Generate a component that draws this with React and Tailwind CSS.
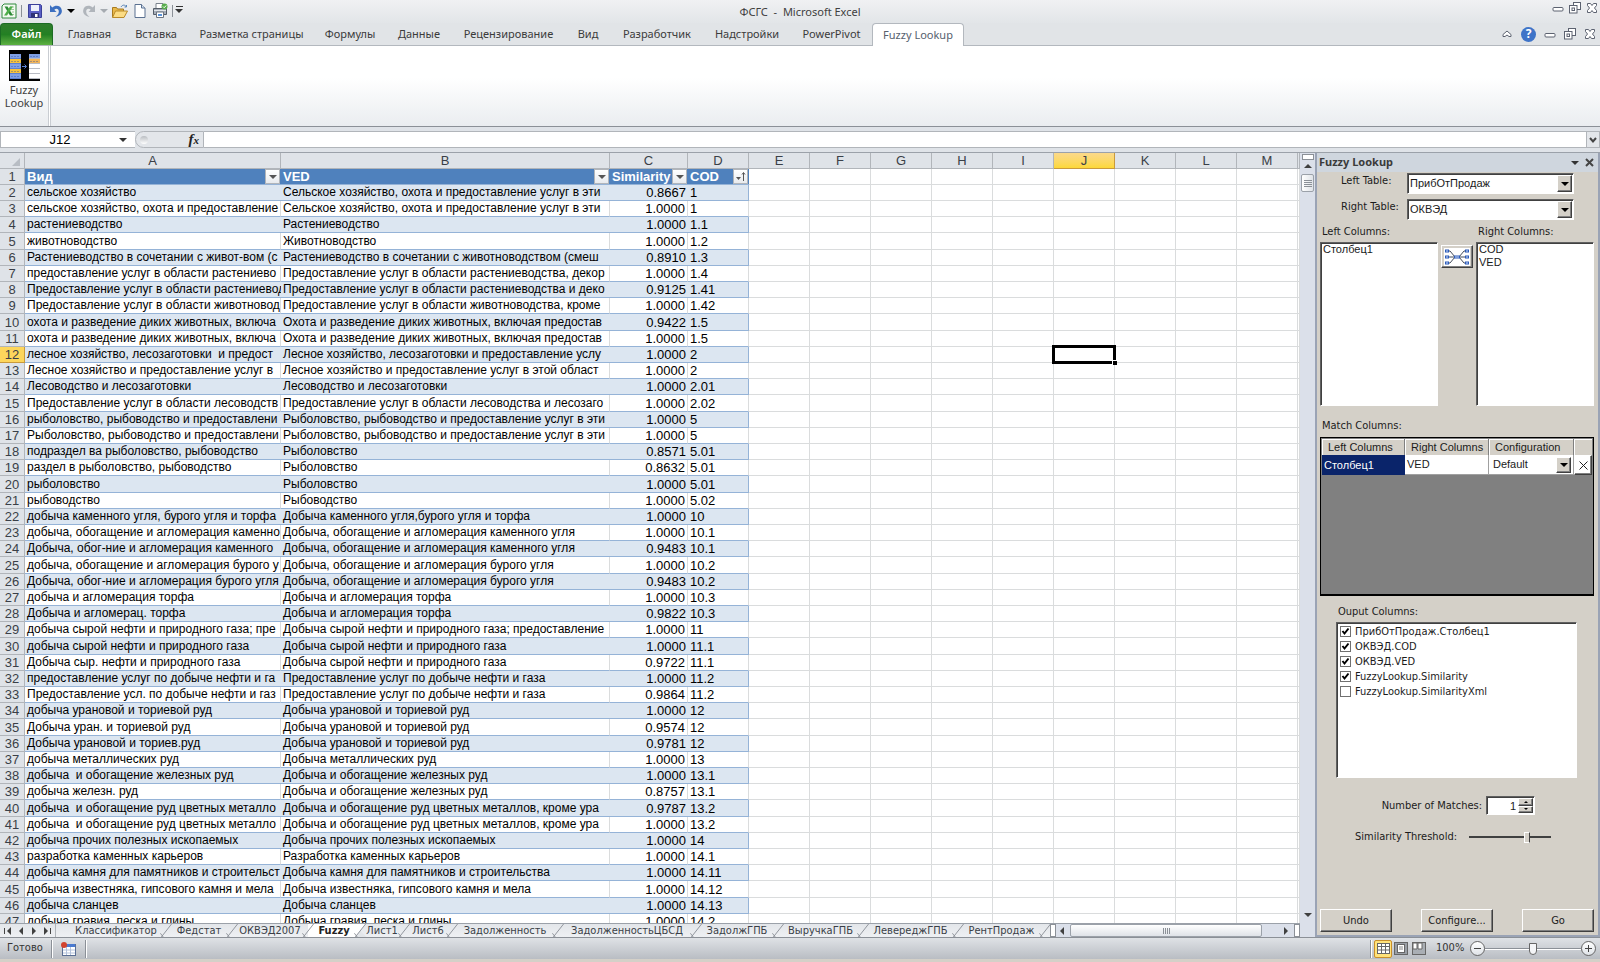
import React, { useState } from 'react';

const RIBBON_TABS = [
  { label: 'Главная', width: 'w-[67px]' },
  { label: 'Вставка', width: 'w-[66px]' },
  { label: 'Разметка страницы', width: 'w-[125px]' },
  { label: 'Формулы', width: 'w-[72px]' },
  { label: 'Данные', width: 'w-[66px]' },
  { label: 'Рецензирование', width: 'w-[113px]' },
  { label: 'Вид', width: 'w-[46px]' },
  { label: 'Разработчик', width: 'w-[92px]' },
  { label: 'Надстройки', width: 'w-[88px]' },
  { label: 'PowerPivot', width: 'w-[81px]' },
  { label: 'Fuzzy Lookup', width: 'w-[92px]' },
];

const SHEET_TABS = [
  { label: 'Классификатор', width: 'w-[100px]' },
  { label: 'Федстат', width: 'w-[66px]' },
  { label: 'ОКВЭД2007', width: 'w-[76px]' },
  { label: 'Fuzzy', width: 'w-[52px]' },
  { label: 'Лист1', width: 'w-[44px]' },
  { label: 'Лист6', width: 'w-[48px]' },
  { label: 'Задолженность', width: 'w-[106px]' },
  { label: 'ЗадолженностьЦБСД', width: 'w-[138px]' },
  { label: 'ЗадолжГПБ', width: 'w-[82px]' },
  { label: 'ВыручкаГПБ', width: 'w-[85px]' },
  { label: 'ЛевереджГПБ', width: 'w-[95px]' },
  { label: 'РентПродаж', width: 'w-[87px]' },
];

const ROWS = [
  ['сельское хозяйство', 'Сельское хозяйство, охота и предоставление услуг в эти', '0.8667', '1'],
  ['сельское хозяйство, охота и предоставление', 'Сельское хозяйство, охота и предоставление услуг в эти', '1.0000', '1'],
  ['растениеводство', 'Растениеводство', '1.0000', '1.1'],
  ['животноводство', 'Животноводство', '1.0000', '1.2'],
  ['Растениеводство в сочетании с живот-вом (с', 'Растениеводство в сочетании с животноводством (смеш', '0.8910', '1.3'],
  ['предоставление услуг в области растениево', 'Предоставление услуг в области растениеводства, декор', '1.0000', '1.4'],
  ['Предоставление услуг в области растениевод', 'Предоставление услуг в области растениеводства и деко', '0.9125', '1.41'],
  ['Предоставление услуг в области животновод', 'Предоставление услуг в области животноводства, кроме', '1.0000', '1.42'],
  ['охота и разведение диких животных, включа', 'Охота и разведение диких животных, включая предостав', '0.9422', '1.5'],
  ['охота и разведение диких животных, включа', 'Охота и разведение диких животных, включая предостав', '1.0000', '1.5'],
  ['лесное хозяйство, лесозаготовки  и предост', 'Лесное хозяйство, лесозаготовки и предоставление услу', '1.0000', '2'],
  ['Лесное хозяйство и предоставление услуг в', 'Лесное хозяйство и предоставление услуг в этой област', '1.0000', '2'],
  ['Лесоводство и лесозаготовки', 'Лесоводство и лесозаготовки', '1.0000', '2.01'],
  ['Предоставление услуг в области лесоводств', 'Предоставление услуг в области лесоводства и лесозаго', '1.0000', '2.02'],
  ['рыболовство, рыбоводство и предоставлени', 'Рыболовство, рыбоводство и предоставление услуг в эти', '1.0000', '5'],
  ['Рыболовство, рыбоводство и предоставлени', 'Рыболовство, рыбоводство и предоставление услуг в эти', '1.0000', '5'],
  ['подраздел ва рыболовство, рыбоводство', 'Рыболовство', '0.8571', '5.01'],
  ['раздел в рыболовство, рыбоводство', 'Рыболовство', '0.8632', '5.01'],
  ['рыболовство', 'Рыболовство', '1.0000', '5.01'],
  ['рыбоводство', 'Рыбоводство', '1.0000', '5.02'],
  ['добыча каменного угля, бурого угля и торфа', 'Добыча каменного угля,бурого угля и торфа', '1.0000', '10'],
  ['добыча, обогащение и агломерация каменно', 'Добыча, обогащение и агломерация каменного угля', '1.0000', '10.1'],
  ['Добыча, обог-ние и агломерация каменного', 'Добыча, обогащение и агломерация каменного угля', '0.9483', '10.1'],
  ['добыча, обогащение и агломерация бурого у', 'Добыча, обогащение и агломерация бурого угля', '1.0000', '10.2'],
  ['Добыча, обог-ние и агломерация бурого угля', 'Добыча, обогащение и агломерация бурого угля', '0.9483', '10.2'],
  ['добыча и агломерация торфа', 'Добыча и агломерация торфа', '1.0000', '10.3'],
  ['Добыча и агломерац. торфа', 'Добыча и агломерация торфа', '0.9822', '10.3'],
  ['добыча сырой нефти и природного газа; пре', 'Добыча сырой нефти и природного газа; предоставление', '1.0000', '11'],
  ['добыча сырой нефти и природного газа', 'Добыча сырой нефти и природного газа', '1.0000', '11.1'],
  ['Добыча сыр. нефти и природного газа', 'Добыча сырой нефти и природного газа', '0.9722', '11.1'],
  ['предоставление услуг по добыче нефти и га', 'Предоставление услуг по добыче нефти и газа', '1.0000', '11.2'],
  ['Предоставление усл. по добыче нефти и газ', 'Предоставление услуг по добыче нефти и газа', '0.9864', '11.2'],
  ['добыча урановой и ториевой руд', 'Добыча урановой и ториевой руд', '1.0000', '12'],
  ['Добыча уран. и ториевой руд', 'Добыча урановой и ториевой руд', '0.9574', '12'],
  ['Добыча урановой и ториев.руд', 'Добыча урановой и ториевой руд', '0.9781', '12'],
  ['добыча металлических руд', 'Добыча металлических руд', '1.0000', '13'],
  ['добыча  и обогащение железных руд', 'Добыча и обогащение железных руд', '1.0000', '13.1'],
  ['добыча железн. руд', 'Добыча и обогащение железных руд', '0.8757', '13.1'],
  ['добыча  и обогащение руд цветных металло', 'Добыча и обогащение руд цветных металлов, кроме ура', '0.9787', '13.2'],
  ['добыча  и обогащение руд цветных металло', 'Добыча и обогащение руд цветных металлов, кроме ура', '1.0000', '13.2'],
  ['добыча прочих полезных ископаемых', 'Добыча прочих полезных ископаемых', '1.0000', '14'],
  ['разработка каменных карьеров', 'Разработка каменных карьеров', '1.0000', '14.1'],
  ['добыча камня для памятников и строительст', 'Добыча камня для памятников и строительства', '1.0000', '14.11'],
  ['добыча известняка, гипсового камня и мела', 'Добыча известняка, гипсового камня и мела', '1.0000', '14.12'],
  ['добыча сланцев', 'Добыча сланцев', '1.0000', '14.13'],
  ['добыча гравия, песка и глины', 'Добыча гравия, песка и глины', '1.0000', '14.2'],
];

const EMPTY_COLUMNS = ['E', 'F', 'G', 'H', 'I', 'J', 'K', 'L', 'M'];
const ACTIVE_COLUMN = 'J';
const ACTIVE_ROW = 12;

const OUTPUT_COLUMNS = [
  'ПрибОтПродаж.Столбец1',
  'ОКВЭД.COD',
  'ОКВЭД.VED',
  'FuzzyLookup.Similarity',
  'FuzzyLookup.SimilarityXml',
];

const UI = "font-['Noto_Sans','Open_Sans',sans-serif]";
const TAHOMA = "font-['DejaVu_Sans_Condensed','DejaVu_Sans',sans-serif]";
const FIELD = "font-['Liberation_Sans',sans-serif] text-[11px]";
const SUNKEN = 'border border-t-[#606060] border-l-[#606060] border-b-white border-r-white shadow-[inset_1px_1px_0_#404040]';
const RAISED = 'border border-t-white border-l-white border-b-[#404040] border-r-[#404040] shadow-[inset_-1px_-1px_0_#808080]';

function Triangle({ dir = 'down', className = 'text-[#404040]' }) {
  const points = {
    down: '0,2 8,2 4,6',
    up: '0,6 8,6 4,2',
    left: '6,0 6,8 2,4',
    right: '2,0 2,8 6,4',
  };
  return (
    <svg viewBox="0 0 8 8" className={`size-2 shrink-0 ${className}`} aria-hidden="true">
      <polygon points={points[dir]} fill="currentColor" />
    </svg>
  );
}

function ExcelIcon() {
  return (
    <svg viewBox="0 0 16 16" className="size-4" aria-hidden="true">
      <path d="M3 1h12v14H1V3z" fill="#f4faf2" stroke="#2f8a3c" />
      <path d="M9 4h4M10 6.5h3M11 9h2M10 11.500h3" stroke="#9cc79b" />
      <path d="M3.500 3.500h3l5.500 9H9z" fill="#2d8a36" />
      <path d="M9 3.500h3l-6 9H3z" fill="#4fae4a" />
    </svg>
  );
}

function SaveIcon() {
  return (
    <svg viewBox="0 0 14 14" className="size-3.5" aria-hidden="true">
      <path d="M.5.5h12l1 1v12H.5z" fill="#5a5fc4" stroke="#3a3f99" />
      <rect x="3" y="1" width="8" height="6" fill="#eef1fb" />
      <rect x="3" y="9" width="8" height="4.500" fill="#2e3275" />
      <rect x="7" y="10" width="2.500" height="3" fill="#fff" />
    </svg>
  );
}

function UndoIcon({ flip = false, color = '#3c6fc0' }) {
  return (
    <svg viewBox="0 0 14 14" className={flip ? 'size-3.5 -scale-x-100' : 'size-3.5'} aria-hidden="true">
      <path d="M1 1v7h6.500L5.300 5.700C7.500 4 9.800 5 9.800 7.500c0 2-1 3.500-3.300 5.500 4.500-1 6.800-3.500 6.300-6.800C12.200 1.500 6.500.5 3.300 3.500z" fill={color} />
    </svg>
  );
}

function OpenIcon() {
  return (
    <svg viewBox="0 0 16 14" className="h-3.5 w-4" aria-hidden="true">
      <path d="M9 3c1.500-2.500 4-2.500 5.500 0V1M14.500 3h-2" fill="none" stroke="#5b86b8" />
      <path d="M.5 3.500h4l1 1.500h6v8H.5z" fill="#e9b94a" stroke="#a87a1f" />
      <path d="M3.500 7h12L12 13.500H.5z" fill="#fbdc84" stroke="#b98a2a" />
    </svg>
  );
}

function NewIcon() {
  return (
    <svg viewBox="0 0 12 14" className="h-3.5 w-3" aria-hidden="true">
      <path d="M1 .5h6.500L11 4v9.500H1z" fill="#fff" stroke="#5b7191" />
      <path d="M7.500.5V4H11" fill="#d5e0ee" stroke="#5b7191" />
    </svg>
  );
}

function PrintIcon() {
  return (
    <svg viewBox="0 0 16 15" className="h-[15px] w-4" aria-hidden="true">
      <path d="M4 .5h7V6H4z" fill="#fff" stroke="#7a828c" />
      <path d="M1.500 5.500h13v6h-13z" fill="#a5adb8" stroke="#555d68" />
      <path d="M2 7.500h12" stroke="#e2e6ea" />
      <path d="M4.500 9h7v5.500h-7z" fill="#fff" stroke="#6d7580" />
      <rect x="6" y="11" width="4" height="2" fill="#5b93d8" />
      <circle cx="12.500" cy="3.500" r="3" fill="#58ad4c" />
      <path d="M11 3.500l1.200 1.200L14.200 2.500" fill="none" stroke="#fff" />
    </svg>
  );
}

function MinimizeIcon() {
  return (
    <svg viewBox="0 0 12 12" className="size-3" aria-hidden="true">
      <rect x="1" y="5.500" width="10" height="3.500" rx="1" fill="#fff" stroke="#5c6270" />
    </svg>
  );
}

function RestoreIcon() {
  return (
    <svg viewBox="0 0 12 12" className="size-3" aria-hidden="true">
      <rect x="4.500" y=".5" width="7" height="7" fill="#fff" stroke="#5c6270" />
      <rect x=".5" y="3.500" width="7.500" height="7.500" fill="#fff" stroke="#5c6270" />
      <rect x="3" y="6" width="2.500" height="2.500" fill="none" stroke="#5c6270" />
    </svg>
  );
}

function CloseIcon() {
  return (
    <svg viewBox="0 0 12 12" className="size-3" aria-hidden="true">
      <path
        d="M1.500 1.500h3L6 3.500l1.500-2h3v2L8.500 6l2 2.500v2h-3L6 8.500l-1.500 2h-3v-2l2-2.500-2-2.500z"
        fill="#fff"
        stroke="#5c6270"
      />
    </svg>
  );
}

function FuzzyIcon() {
  const left = ['#7f9fe4', '#f7c23c', '#7f9fe4', '#f7c23c', '#7f9fe4'];
  const right = ['#7f9fe4', '#f2b55a', '#fff', '#fff', '#fff'];
  return (
    <svg viewBox="0 0 31 31" className="size-[31px]" aria-hidden="true">
      <rect width="31" height="31" fill="#000" />
      <rect x="1" y="4" width="11" height="25" fill="#5b7fd0" />
      <rect x="20" y="4" width="11" height="25" fill="#b9bcc4" />
      {left.map((fill, i) => (
        <g key={i}>
          <rect x="1" y={4 + i * 5} width="11" height="4" fill={fill} />
          <path d={`M2 ${6.5 + i * 5}h8`} stroke="#2b4f9e" strokeOpacity=".4" strokeDasharray="2 1" />
          <rect x="20" y={4 + i * 5} width="11" height="4" fill={right[i]} />
          {i < 2 && <path d={`M21 ${6.5 + i * 5}h8`} stroke="#2b4f9e" strokeOpacity=".4" strokeDasharray="2 1" />}
        </g>
      ))}
      <path d="M13 16.500h4M15.500 14.500l2 2-2 2" fill="none" stroke="#5f86d8" />
    </svg>
  );
}

function MatchIcon() {
  return (
    <svg viewBox="0 0 26 18" className="h-[18px] w-[26px]" aria-hidden="true">
      <rect width="26" height="18" fill="#fff" />
      <path d="M4 3h2l5 6M4 9h18M4 15h2l5-6M22 3h-2l-5 6M22 15h-2l-5-6" fill="none" stroke="#444c5c" />
      <g fill="#cfe0ff" stroke="#2c5bb8">
        <rect x="1.500" y="2" width="3" height="2" />
        <rect x="1.500" y="8" width="3" height="2" />
        <rect x="1.500" y="14" width="3" height="2" />
        <rect x="21.500" y="2" width="3" height="2" />
        <rect x="21.500" y="8" width="3" height="2" />
        <rect x="21.500" y="14" width="3" height="2" />
        <rect x="10.500" y="8" width="5" height="2" />
      </g>
    </svg>
  );
}

function TitleBar() {
  return (
    <header className="relative flex h-[23px] shrink-0 items-center justify-between bg-linear-to-b from-[#f0f1f3] to-[#e2e5e8] pr-0.5 pl-px">
      <div className="flex items-center pb-0.5">
        <button aria-label="Excel"><ExcelIcon /></button>
        <span className="ml-1 h-3 w-px bg-[#8b9097]" />
        <button aria-label="Сохранить" className="ml-1.5"><SaveIcon /></button>
        <button aria-label="Отменить" className="ml-[7px]"><UndoIcon /></button>
        <button aria-label="Список отмены" className="ml-1"><Triangle className="text-black" /></button>
        <button aria-label="Вернуть" className="ml-[7px]"><UndoIcon flip color="#b0b5bb" /></button>
        <button aria-label="Список возврата" className="ml-1"><Triangle className="text-[#a6abb1]" /></button>
        <button aria-label="Открыть" className="ml-1"><OpenIcon /></button>
        <button aria-label="Создать" className="ml-1.5"><NewIcon /></button>
        <button aria-label="Печать" className="ml-1.5"><PrintIcon /></button>
        <span className="ml-1 h-3 w-px bg-[#8b9097]" />
        <button aria-label="Настройка панели" className="ml-0.5 flex flex-col items-center">
          <span className="h-px w-[7px] bg-[#333]" />
          <Triangle className="text-[#333]" />
        </button>
      </div>
      <h1 className={`pointer-events-none absolute inset-x-0 text-center text-[11px] leading-4 whitespace-pre text-[#404040] ${UI}`}>
        ФСГС  -  Microsoft Excel
      </h1>
      <div className="flex items-start gap-[5px] self-start pt-0.5">
        <button aria-label="Свернуть"><MinimizeIcon /></button>
        <button aria-label="Восстановить"><RestoreIcon /></button>
        <button aria-label="Закрыть"><CloseIcon /></button>
      </div>
    </header>
  );
}

function RibbonTabs() {
  return (
    <nav className={`flex h-[23px] shrink-0 items-stretch border-b border-[#b3b8be] bg-[#e1e4e7] text-[11px] ${UI}`}>
      <button className="w-[53px] rounded-t-sm border border-b-0 border-[#1c6b24] bg-linear-to-b from-[#2f7d2c] via-[#238023] to-[#5cb142] font-semibold text-white">
        Файл
      </button>
      <div className="ml-[3px] flex grow">
        {RIBBON_TABS.map(({ label, width }) => (
          <button
            key={label}
            className={`${width} shrink-0 whitespace-nowrap ${
              label === 'Fuzzy Lookup'
                ? '-mb-px rounded-t-sm border border-b-0 border-[#b3b8be] bg-white text-[#56606e]'
                : 'text-[#3b3b3b]'
            }`}
          >
            {label}
          </button>
        ))}
      </div>
      <div className="flex items-center gap-2 pr-1">
        <button aria-label="Свернуть ленту">
          <svg viewBox="0 0 12 12" className="size-3" aria-hidden="true">
            <path d="M2 6.500L6 3l4 3.500v2H8L6 7 4 8.500H2z" fill="#fff" stroke="#5c6270" />
          </svg>
        </button>
        <button aria-label="Справка" className="flex size-[15px] items-center justify-center rounded-full bg-[#3f74c8] text-[12px] leading-none font-bold text-white">
          ?
        </button>
        <button aria-label="Свернуть окно"><MinimizeIcon /></button>
        <button aria-label="Восстановить окно"><RestoreIcon /></button>
        <button aria-label="Закрыть окно"><CloseIcon /></button>
      </div>
    </nav>
  );
}

function Ribbon() {
  return (
    <div className="flex h-[81px] shrink-0 border-b border-[#8b9097] bg-linear-to-b from-white from-40% to-[#eaedf0]">
      <button className={`flex w-12 flex-col items-center pt-1 text-[11px] leading-[13px] text-[#404040] ${UI}`}>
        <FuzzyIcon />
        <span className="mt-0.5">Fuzzy<br />Lookup</span>
      </button>
      <span className="w-[3px] border-x border-[#c9cdd2] bg-white" />
    </div>
  );
}

function FormulaBar() {
  return (
    <div className="flex h-[26px] shrink-0 border-b border-[#9ba1a9] bg-[#dfe3e8] pt-1 pb-1">
      <div className="flex w-[135px] items-center border-y border-l border-[#b1b5ba] bg-white pr-1.5">
        <input
          aria-label="Имя"
          defaultValue="J12"
          className="w-[118px] bg-transparent text-center font-['Liberation_Sans',sans-serif] text-[13px] leading-4 outline-none"
        />
        <button aria-label="Список имён"><Triangle className="text-[#333]" /></button>
      </div>
      <div className="flex w-[69px] items-center justify-between rounded-l-full border border-[#b1b5ba] bg-[#e3e6ea] pr-1 pl-1">
        <span className="size-2 rounded-full bg-linear-to-b from-[#b9bdc2] to-white" />
        <button aria-label="Вставить функцию" className="font-['Liberation_Serif',serif] text-[15px] leading-none font-bold text-[#222] italic">
          f<span className="text-[11px]">x</span>
        </button>
      </div>
      <input aria-label="Строка формул" className="min-w-0 grow border-y border-[#b1b5ba] bg-white px-1 text-[13px] outline-none" />
      <button aria-label="Развернуть строку формул" className="flex w-3.5 items-center justify-center border border-[#b1b5ba] bg-[#e3e6ea]">
        <svg viewBox="0 0 8 8" className="size-2" aria-hidden="true">
          <path d="M1 2l3 3.500L7 2" fill="none" stroke="#444" strokeWidth="2" />
        </svg>
      </button>
    </div>
  );
}

function FilterHeader({ label, sorted }) {
  return (
    <div className="flex h-full items-center justify-between pr-px pl-0.5">
      {label}
      <button aria-label={`Фильтр ${label}`} className="flex size-[15px] shrink-0 items-center justify-center border border-[#b1b5ba] bg-linear-to-b from-white to-[#e8ebee]">
        {sorted ? (
          <svg viewBox="0 0 11 11" className="size-[11px]" aria-hidden="true">
            <path d="M1 6h5L3.500 9z" fill="#555" />
            <path d="M8.500 10V2M7 3.500l1.500-2 1.500 2" fill="none" stroke="#555" />
          </svg>
        ) : (
          <Triangle className="text-[#555]" />
        )}
      </button>
    </div>
  );
}

function Sheet() {
  const gutter = 'border-r border-b border-[#b1b5ba] bg-[#dfe3e8] font-normal text-[#3a3f47]';
  const heading = 'bg-[#4f81bd] border-b border-[#95b3d7] text-left font-bold text-white';
  const blank = 'border-r border-b border-[#dadcdd]';
  const text = 'overflow-hidden whitespace-pre text-[12px]';

  return (
    <div className="h-0 min-h-full overflow-hidden bg-white">
      <table className="w-full table-fixed border-separate border-spacing-0 font-['Liberation_Sans',sans-serif] text-[13px] leading-[15px] text-black [&_td]:p-0 [&_th]:p-0">
        <colgroup>
          <col className="w-[25px]" />
          <col className="w-[256px]" />
          <col className="w-[329px]" />
          <col className="w-[78px]" />
          <col className="w-[61px]" />
          {EMPTY_COLUMNS.map((name) => <col key={name} className="w-[61px]" />)}
          <col />
        </colgroup>
        <thead>
          <tr className="h-4">
            <th className={gutter}>
              <svg viewBox="0 0 24 15" className="ml-auto h-[15px] w-6" aria-hidden="true">
                <polygon points="20,5 20,13 12,13" fill="#b8bdc4" />
              </svg>
            </th>
            {['A', 'B', 'C', 'D', ...EMPTY_COLUMNS].map((name) => (
              <th
                key={name}
                className={
                  name === ACTIVE_COLUMN
                    ? 'border-r border-b border-[#c99a3c] bg-linear-to-b from-[#fbd98a] to-[#fdd835] font-normal text-[#3a3f47]'
                    : gutter
                }
              >
                {name}
              </th>
            ))}
            <th className={gutter} />
          </tr>
        </thead>
        <tbody className="[&>tr]:h-4 [&>tr:nth-child(5n)]:h-[17px]">
          <tr>
            <th className={gutter}>1</th>
            <th className={heading}><FilterHeader label="Вид" /></th>
            <th className={heading}><FilterHeader label="VED" /></th>
            <th className={heading}><FilterHeader label="Similarity" /></th>
            <th className={heading}><FilterHeader label="COD" sorted /></th>
            {EMPTY_COLUMNS.map((name) => <td key={name} className={blank} />)}
            <td className={blank} />
          </tr>
          {ROWS.map(([kind, ved, similarity, cod], i) => {
            const row = i + 2;
            const band = i % 2 === 0 ? 'bg-[#dce6f1] border-b border-[#95b3d7]' : 'border-b border-b-[#95b3d7] border-r border-r-[#dadcdd]';
            return (
              <tr key={row}>
                <th className={row === ACTIVE_ROW ? 'border-r border-b border-[#c99a3c] bg-[#fdd65c] font-normal text-[#3a3f47]' : gutter}>
                  {row}
                </th>
                <td className={`${text} ${band}`}><span className="pl-0.5">{kind}</span></td>
                <td className={`${text} ${band}`}><span className="pl-0.5">{ved}</span></td>
                <td className={`text-right ${band}`}><span className="pr-0.5">{similarity}</span></td>
                <td className={`${band} border-r border-r-[#95b3d7]`}><span className="pl-0.5">{cod}</span></td>
                {EMPTY_COLUMNS.map((name) =>
                  name === ACTIVE_COLUMN && row === ACTIVE_ROW ? (
                    <td key={name} className={`relative ${blank}`}>
                      <div className="absolute -inset-0.5 border-3 border-black" />
                      <div className="absolute -right-[3px] -bottom-[3px] size-[5px] border-t border-l border-white bg-black" />
                    </td>
                  ) : (
                    <td key={name} className={blank} />
                  ),
                )}
                <td className={blank} />
              </tr>
            );
          })}
        </tbody>
      </table>
    </div>
  );
}

function SheetTab({ label, width, active, onClick }) {
  return (
    <button
      onClick={onClick}
      className={`relative h-full shrink-0 whitespace-nowrap text-center ${width} ${
        active ? 'bg-white font-bold text-[#222]' : 'text-[#3a3f47]'
      }`}
    >
      {label}
      <svg viewBox="0 0 14 14" className="absolute top-0 -right-[7px] z-10 h-full w-3.5" aria-hidden="true">
        {active && <polygon points="7,0 13,0 7,7" fill="#fff" />}
        {active && <polygon points="2,14 7,7 14,14" fill="#e3e6ea" />}
        <path d="M13 0L2 14" stroke="#8b9097" />
        <path d="M1 10l3 4" stroke="#8b9097" />
      </svg>
    </button>
  );
}

function SheetBar() {
  const [active, setActive] = useState('Fuzzy');
  return (
    <div className={`flex h-[14px] shrink-0 items-stretch border-t border-[#9ba1a9] bg-linear-to-b from-[#e3e6ea] to-[#eef0f3] text-[11px] leading-[13px] ${TAHOMA}`}>
      <div className="flex w-14 items-center justify-between border-r border-[#b1b5ba] px-1">
        <button aria-label="Первый лист" className="flex items-center"><span className="h-1.5 w-px bg-[#444]" /><Triangle dir="left" /></button>
        <button aria-label="Предыдущий лист"><Triangle dir="left" /></button>
        <button aria-label="Следующий лист"><Triangle dir="right" /></button>
        <button aria-label="Последний лист" className="flex items-center"><Triangle dir="right" /><span className="h-1.5 w-px bg-[#444]" /></button>
      </div>
      <div className="flex min-w-0 grow overflow-hidden pl-[10px]">
        {SHEET_TABS.map((tab) => (
          <SheetTab key={tab.label} {...tab} active={tab.label === active} onClick={() => setActive(tab.label)} />
        ))}
      </div>
      <div className="flex w-[250px] shrink-0 items-center bg-[#dbe0ea]">
        <span className="h-full w-1.5 border border-[#8b9097] bg-white" />
        <button aria-label="Прокрутка влево" className="ml-0.5"><Triangle dir="left" /></button>
        <div className="ml-1 flex h-[13px] w-[192px] items-center justify-center gap-px rounded-xs border border-[#9ba1a9] bg-linear-to-b from-white to-[#dfe3e8]">
          {[0, 1, 2, 3].map((i) => <span key={i} className="h-1.5 w-px bg-[#8b9097]" />)}
        </div>
        <button aria-label="Прокрутка вправо" className="ml-auto"><Triangle dir="right" /></button>
        <span className="ml-1 h-full w-1.5 border border-[#8b9097] bg-white" />
      </div>
    </div>
  );
}

function VerticalScroll() {
  return (
    <div className="flex w-[15px] shrink-0 flex-col items-center bg-[#dbe0ea] pb-[18px]">
      <span className="mt-px h-1.5 w-3 border border-[#8b9097] bg-white" />
      <button aria-label="Прокрутка вверх" className="mt-0.5"><Triangle dir="up" /></button>
      <div className="mt-1 flex h-[18px] w-[13px] flex-col items-center justify-center gap-px rounded-xs border border-[#9ba1a9] bg-linear-to-r from-white to-[#dfe3e8]">
        {[0, 1, 2, 3].map((i) => <span key={i} className="h-px w-2 bg-[#8b9097]" />)}
      </div>
      <button aria-label="Прокрутка вниз" className="mt-auto"><Triangle /></button>
    </div>
  );
}

function TableSelect({ id, label, options }) {
  return (
    <div className="flex items-start pr-5">
      <label htmlFor={id} className="w-[66px] whitespace-nowrap">{label}</label>
      <div className={`relative grow bg-white p-px ${SUNKEN}`}>
        <select id={id} className={`block h-[17px] w-full appearance-none pl-px leading-[17px] outline-none ${FIELD}`}>
          {options.map((option) => <option key={option}>{option}</option>)}
        </select>
        <span className={`pointer-events-none absolute inset-y-px right-px flex w-[15px] items-center justify-center bg-[#d4d0c8] ${RAISED}`}>
          <Triangle className="text-black" />
        </span>
      </div>
    </div>
  );
}

function ColumnList({ id, label, options }) {
  return (
    <div className="flex w-[118px] flex-col">
      <label htmlFor={id} className="pl-0.5 leading-[14px]">{label}</label>
      <select
        id={id}
        multiple
        className={`mt-[3px] h-[164px] appearance-none overflow-hidden bg-white pl-px outline-none ${FIELD} ${SUNKEN}`}
      >
        {options.map((option) => <option key={option} className="h-[13px] min-h-0 px-px py-0 leading-[13px]">{option}</option>)}
      </select>
    </div>
  );
}

function MatchTable() {
  const head = 'h-4 border-r border-[#808080] pl-1.5 text-left font-normal shadow-[inset_1px_1px_0_#fff]';
  const cell = 'h-5 border-r border-b border-[#a0a0a0] bg-white pl-0.5';
  return (
    <div className="mt-1 h-[159px] border border-b-2 border-black bg-[#808080] p-px">
      <table className={`w-full table-fixed border-separate border-spacing-0 leading-[15px] ${FIELD}`}>
        <colgroup>
          <col />
          <col className="w-[84px]" />
          <col className="w-[85px]" />
          <col className="w-[18px]" />
        </colgroup>
        <thead className="bg-[#d4d0c8]">
          <tr>
            <th className={head}>Left Columns</th>
            <th className={head}>Right Columns</th>
            <th className={head}>Configuration</th>
            <th className="shadow-[inset_1px_1px_0_#fff]" />
          </tr>
        </thead>
        <tbody>
          <tr>
            <td className="h-5 bg-[#0a246a] pl-0.5 text-white">Столбец1</td>
            <td className={cell}>VED</td>
            <td className={cell}>
              <div className="relative mr-0.5">
                <select aria-label="Configuration" className="block h-4 w-full appearance-none pl-0.5 outline-none">
                  <option>Default</option>
                </select>
                <span className={`pointer-events-none absolute inset-y-0 right-0 flex w-[15px] items-center justify-center bg-[#d4d0c8] ${RAISED}`}>
                  <Triangle className="text-black" />
                </span>
              </div>
            </td>
            <td className="bg-white p-0">
              <button aria-label="Удалить" className={`flex h-5 w-full items-center justify-center bg-white ${RAISED}`}>
                <svg viewBox="0 0 9 9" className="size-[9px]" aria-hidden="true">
                  <path d="M.5.5l8 8M8.500.5l-8 8" stroke="#222" />
                </svg>
              </button>
            </td>
          </tr>
        </tbody>
      </table>
    </div>
  );
}

function OutputList() {
  const [checked, setChecked] = useState([true, true, true, true, false]);
  const toggle = (index) => setChecked(checked.map((value, i) => (i === index ? !value : value)));
  return (
    <fieldset className="mt-[9px] pr-[17px] pl-4">
      <legend className="pl-0.5 leading-[14px]">Ouput Columns:</legend>
      <div className={`mt-[3px] h-[156px] bg-white pt-px pl-[3px] ${SUNKEN}`}>
        {OUTPUT_COLUMNS.map((name, i) => (
          <label key={name} className="flex h-[15px] items-center gap-1">
            <span className="relative flex">
              <input
                type="checkbox"
                checked={checked[i]}
                onChange={() => toggle(i)}
                className="peer size-[11px] appearance-none border border-[#707070] bg-white"
              />
              <svg viewBox="0 0 11 11" className="pointer-events-none absolute inset-0 size-[11px] opacity-0 peer-checked:opacity-100" aria-hidden="true">
                <path d="M2.500 5l2 2.500 4-5" fill="none" stroke="#000" strokeWidth="2" />
              </svg>
            </span>
            {name}
          </label>
        ))}
      </div>
    </fieldset>
  );
}

function LookupPane() {
  const [matches, setMatches] = useState(1);
  return (
    <aside className="flex w-[285px] shrink-0 flex-col border-x-2 border-b-2 border-[#9aa3b5] bg-[#d4d0c8] pb-[3px]">
      <div className={`flex h-[19px] shrink-0 items-center bg-[#cfd6de] pr-1 pl-0.5 ${UI}`}>
        <h2 className="grow text-[11px] font-bold text-[#3b3b3b]">Fuzzy Lookup</h2>
        <button aria-label="Параметры области" className="mr-1.5"><Triangle className="text-[#333]" /></button>
        <button aria-label="Закрыть область">
          <svg viewBox="0 0 9 9" className="size-[9px]" aria-hidden="true">
            <path d="M1 1l7 7M8 1L1 8" stroke="#444" strokeWidth="2" />
          </svg>
        </button>
      </div>
      <div className={`flex grow flex-col pr-1 pl-[3px] text-[11px] leading-4 text-[#1b1b1b] ${TAHOMA}`}>
        <div className="flex flex-col gap-[5px] pt-px pl-[21px]">
          <TableSelect id="left-table" label="Left Table:" options={['ПрибОтПродаж', 'ОКВЭД']} />
          <TableSelect id="right-table" label="Right Table:" options={['ОКВЭД', 'ПрибОтПродаж']} />
        </div>
        <div className="mt-[5px] flex justify-between">
          <ColumnList id="left-columns" label="Left Columns:" options={['Столбец1']} />
          <button aria-label="Match" className={`mt-5 flex h-[23px] w-8 items-center justify-center self-start bg-[#d4d0c8] ${RAISED}`}>
            <MatchIcon />
          </button>
          <ColumnList id="right-columns" label="Right Columns:" options={['COD', 'VED']} />
        </div>
        <p className="mt-[13px] pl-0.5 leading-[14px]">Match Columns:</p>
        <MatchTable />
        <OutputList />
        <div className="mt-[18px] flex items-center justify-end gap-1 pr-[59px]">
          <label htmlFor="matches">Number of Matches:</label>
          <div className={`flex h-[19px] w-[49px] bg-white p-px ${SUNKEN}`}>
            <input
              id="matches"
              type="number"
              value={matches}
              onChange={(e) => setMatches(Number(e.target.value))}
              className={`w-0 grow [appearance:textfield] pr-0.5 text-right outline-none [&::-webkit-inner-spin-button]:appearance-none ${FIELD}`}
            />
            <div className="flex w-[15px] flex-col">
              <button aria-label="Больше" onClick={() => setMatches(matches + 1)} className={`flex h-0 grow items-center justify-center bg-[#d4d0c8] ${RAISED}`}>
                <svg viewBox="0 0 4 2" className="h-0.5 w-1" aria-hidden="true"><polygon points="0,2 4,2 2,0" /></svg>
              </button>
              <button aria-label="Меньше" onClick={() => setMatches(Math.max(1, matches - 1))} className={`flex h-0 grow items-center justify-center bg-[#d4d0c8] ${RAISED}`}>
                <svg viewBox="0 0 4 2" className="h-0.5 w-1" aria-hidden="true"><polygon points="0,0 4,0 2,2" /></svg>
              </button>
            </div>
          </div>
        </div>
        <div className="mt-3.5 flex items-center justify-end gap-3 pr-[43px]">
          <label htmlFor="threshold">Similarity Threshold:</label>
          <input
            id="threshold"
            type="range"
            defaultValue="72"
            className="h-3 w-[82px] appearance-none bg-transparent [&::-webkit-slider-runnable-track]:h-0.5 [&::-webkit-slider-runnable-track]:bg-[#404040] [&::-webkit-slider-thumb]:-mt-1 [&::-webkit-slider-thumb]:h-[11px] [&::-webkit-slider-thumb]:w-1.5 [&::-webkit-slider-thumb]:appearance-none [&::-webkit-slider-thumb]:border [&::-webkit-slider-thumb]:border-white [&::-webkit-slider-thumb]:border-r-[#404040] [&::-webkit-slider-thumb]:bg-[#d4d0c8]"
          />
        </div>
        <div className="mt-auto flex justify-between">
          {['Undo', 'Configure...', 'Go'].map((name) => (
            <button key={name} className={`h-[23px] w-[72px] bg-[#d4d0c8] ${RAISED}`}>{name}</button>
          ))}
        </div>
      </div>
    </aside>
  );
}

function StatusBar() {
  return (
    <footer className={`flex h-[21px] shrink-0 items-center bg-linear-to-b from-[#dfe2e6] to-[#b9bdc3] text-[11px] text-[#333] ${TAHOMA}`}>
      <span className="pl-[7px]">Готово</span>
      <span className="ml-2 h-[18px] w-0.5 border-l border-[#8b9097] bg-white" />
      <button aria-label="Запись макроса" className="ml-2">
        <svg viewBox="0 0 15 14" className="h-3.5 w-[15px]" aria-hidden="true">
          <rect x="1.500" y="2.500" width="13" height="11" fill="#fff" stroke="#5a6f94" />
          <rect x="2" y="2" width="12" height="3" fill="#4a7ad0" />
          <path d="M2 8h12M2 11h12M5.500 5v8M9.500 5v8" stroke="#b4c3dc" />
          <circle cx="3" cy="3" r="3" fill="#d2432f" />
        </svg>
      </button>
      <span className="ml-[9px] h-[18px] w-0.5 border-l border-[#8b9097] bg-white" />
      <div className="ml-auto flex items-center pr-1">
        <span className="h-[18px] w-0.5 border-l border-[#8b9097] bg-white" />
        <button aria-label="Обычный" className="ml-0.5 flex h-[18px] w-[18px] items-center justify-center rounded-xs border border-[#c98f2a] bg-[#ffe27a]">
          <svg viewBox="0 0 13 11" className="h-[11px] w-[13px]" aria-hidden="true">
            <rect x=".5" y=".5" width="12" height="10" fill="#fff" stroke="#666" />
            <path d="M0 3.500h13M0 7h13M4.500 0v11M8.500 0v11" stroke="#666" />
          </svg>
        </button>
        <button aria-label="Разметка страницы" className="ml-0.5">
          <svg viewBox="0 0 14 13" className="h-[13px] w-3.5" aria-hidden="true">
            <rect x=".5" y=".5" width="13" height="12" fill="#9a9fa6" stroke="#666" />
            <rect x="3.500" y="2.500" width="7" height="8" fill="#fff" stroke="#666" />
            <path d="M5 5h4M5 7h4" stroke="#888" />
          </svg>
        </button>
        <button aria-label="Страничный режим" className="ml-1">
          <svg viewBox="0 0 14 13" className="h-[13px] w-3.5" aria-hidden="true">
            <rect x=".5" y=".5" width="13" height="12" fill="#a9aeb4" stroke="#666" />
            <path d="M1 1h4v6H1zM6 1h4v6H6z" fill="#fff" stroke="#666" />
          </svg>
        </button>
        <button className="ml-2.5 w-[27px] whitespace-nowrap">100%</button>
        <button aria-label="Уменьшить" className="ml-[7px] flex size-[15px] items-center justify-center rounded-full border border-[#666] bg-linear-to-b from-white to-[#dfe3e8]">
          <span className="h-px w-[7px] bg-[#444]" />
        </button>
        <input
          aria-label="Масштаб"
          type="range"
          defaultValue="50"
          className="h-3.5 w-24 appearance-none bg-transparent [&::-webkit-slider-runnable-track]:h-0.5 [&::-webkit-slider-runnable-track]:border-b [&::-webkit-slider-runnable-track]:border-white [&::-webkit-slider-runnable-track]:bg-[#8b9097] [&::-webkit-slider-thumb]:-mt-[5px] [&::-webkit-slider-thumb]:h-3 [&::-webkit-slider-thumb]:w-2 [&::-webkit-slider-thumb]:appearance-none [&::-webkit-slider-thumb]:rounded-b-full [&::-webkit-slider-thumb]:border [&::-webkit-slider-thumb]:border-[#666] [&::-webkit-slider-thumb]:bg-[#f4f5f7]"
        />
        <button aria-label="Увеличить" className="relative flex size-[15px] items-center justify-center rounded-full border border-[#666] bg-linear-to-b from-white to-[#dfe3e8]">
          <span className="h-px w-[7px] bg-[#444]" />
          <span className="absolute h-[7px] w-px bg-[#444]" />
        </button>
      </div>
    </footer>
  );
}

export default function App() {
  return (
    <div className="flex h-screen flex-col overflow-hidden bg-[#d4d0c8] pb-[3px]">
      <TitleBar />
      <RibbonTabs />
      <Ribbon />
      <FormulaBar />
      <main className="flex min-h-0 grow border-b border-[#8b9097]">
        <div className="flex min-w-0 grow flex-col">
          <div className="min-h-0 grow"><Sheet /></div>
          <SheetBar />
        </div>
        <VerticalScroll />
        <LookupPane />
      </main>
      <StatusBar />
    </div>
  );
}
